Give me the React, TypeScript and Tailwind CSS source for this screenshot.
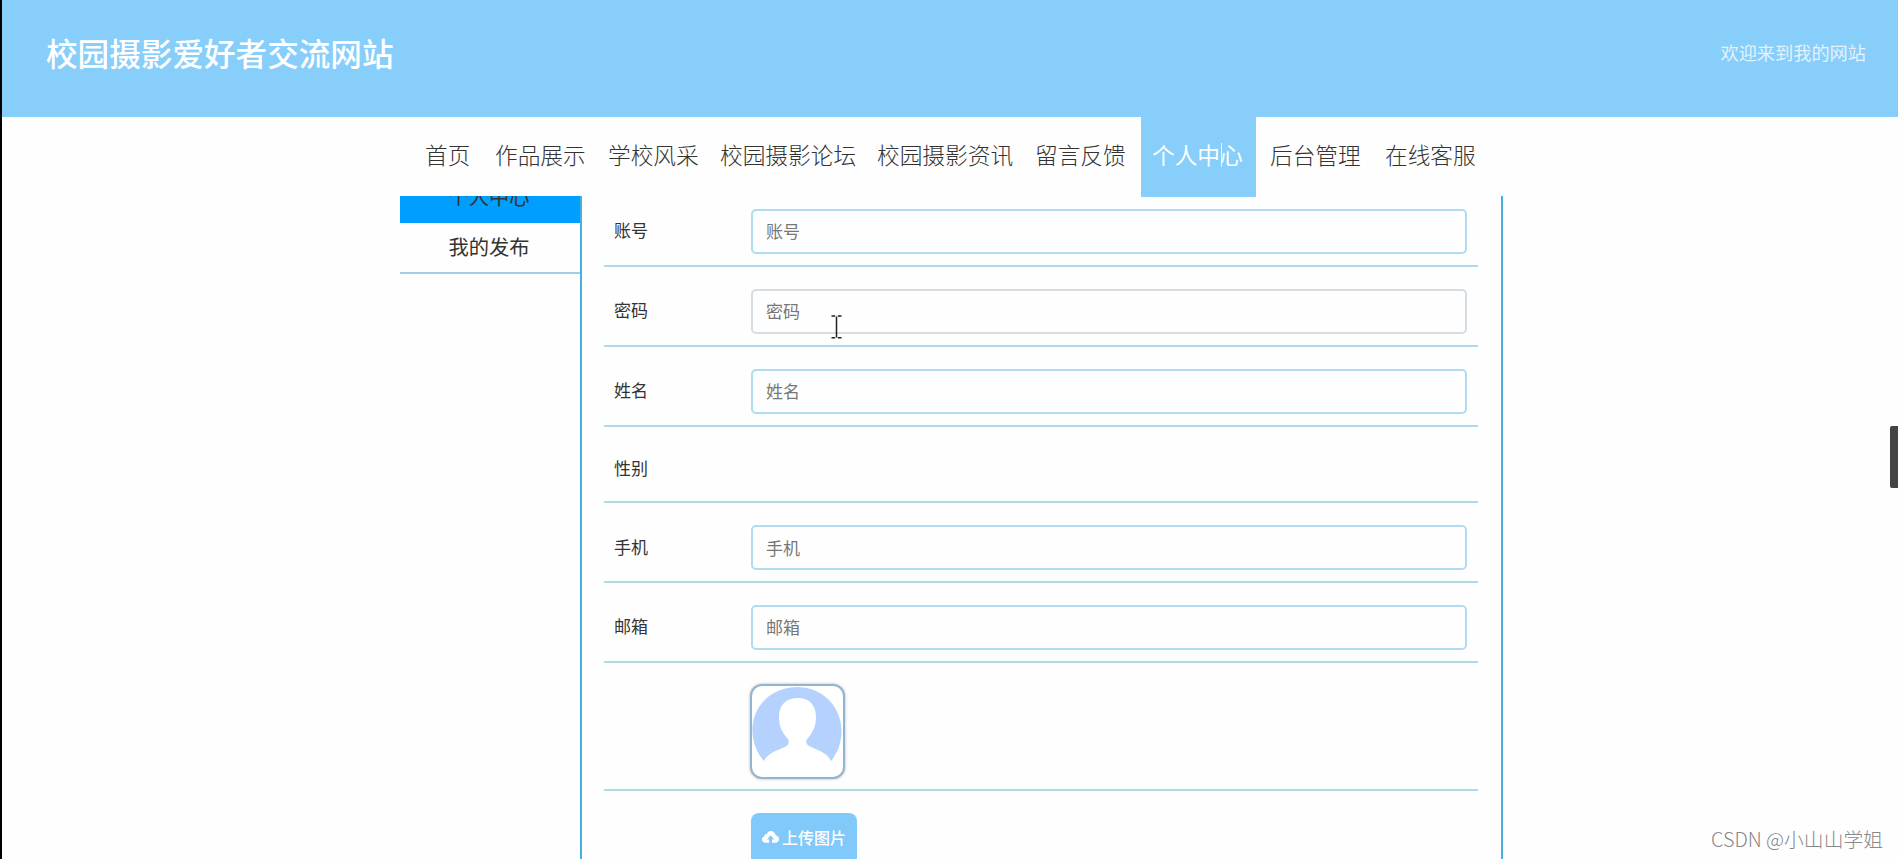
const navItems = [
  { label: '首页', width: 'w-[70px]' },
  { label: '作品展示', width: 'w-[113px]' },
  { label: '学校风采', width: 'w-[112px]' },
  { label: '校园摄影论坛', width: 'w-[157px]' },
  { label: '校园摄影资讯', width: 'w-[158px]' },
  { label: '留言反馈', width: 'w-[117px]' },
  { label: '个人中心', width: 'w-[115px]', active: true },
  { label: '后台管理', width: 'w-[118px]' },
  { label: '在线客服', width: 'w-[113px]' },
];

const fields = [
  { label: '账号', input: true, height: 'h-[80px]', shift: 'pb-[2px]' },
  { label: '密码', input: true, height: 'h-[80px]', shift: 'pb-[2px]', muted: true },
  { label: '姓名', input: true, height: 'h-[80px]', shift: 'pb-[2px]' },
  { label: '性别', input: false, height: 'h-[76px]', shift: '' },
  { label: '手机', input: true, height: 'h-[80px]', shift: 'pb-px' },
  { label: '邮箱', input: true, height: 'h-[80px]', shift: 'pb-[2px]' },
];

function Avatar() {
  return (
    <div className="w-[95px] h-[95px] rounded-[12px] border-2 border-[#8fb6d2] bg-white overflow-hidden shadow-[0_0_3px_#c9b0a4]">
      <svg viewBox="0 0 91 91" className="w-full h-full">
        <path
          d="M12 75C-6 54-3 23 20 8C38-3 61-1 76 13C94 31 93 58 79 75C74 65 62 63 57 60C54 58 53 55 56 52C61 46 64 40 64 31C64 19 57 12 46 12C34 12 27 19 27 31C27 40 30 46 35 52C38 55 37 59 33 61C27 64 16 66 12 75Z"
          fill="#b5d2ff"
        />
      </svg>
    </div>
  );
}

function CloudUpload() {
  return (
    <svg width="17" height="12" viewBox="0 0 17 12" fill="currentColor">
      <path d="M3.6 11.8C1.4 11.7 0 10.3 0 8.4c0-1.6 1-2.8 2.3-3.2C2.4 3.6 3.5 2.8 4.8 3C5.6 1.1 7 .1 8.8.1c2.5 0 4.4 1.7 4.7 4.2 2 .2 3.5 1.7 3.5 3.8 0 2.2-1.6 3.7-3.7 3.7H10V8.4h2.3L8.6 4.3 5 8.4h2.2v3.4z" />
    </svg>
  );
}

function TextCursor() {
  return (
    <svg className="absolute left-[829px] top-[315px]" width="11" height="24" viewBox="0 0 11 24" fill="none" stroke="#222" strokeWidth="1.5">
      <path d="M.5 1H4.2M6.8 1h3.7M5.5 1.5v21M.5 22.7H4.2M6.8 22.7h3.7" />
    </svg>
  );
}

export default function App() {
  return (
    <div className="relative h-[859px] overflow-hidden flex flex-col border-l-2 border-black bg-[#fefefe] text-[#333] font-['Noto_Sans_CJK_SC',sans-serif]">
      <header className="shrink-0 h-[117px] pl-[44px] pr-[32px] pb-[12px] flex items-center justify-between bg-[#87cefa]">
        <h1 className="text-[31.6px] leading-none font-medium text-white">校园摄影爱好者交流网站</h1>
        <span className="text-[18.2px] leading-none text-[#e3f2fc]">欢迎来到我的网站</span>
      </header>

      <nav className="shrink-0 relative z-10 h-[79px] pl-[412px] flex text-[22.7px] font-light">
        {navItems.map(({ label, width, active }) => (
          <a
            key={label}
            className={`shrink-0 h-[80px] pb-[3px] flex items-center whitespace-nowrap ${width} ${
              active ? 'bg-[#87cefa] text-white font-normal pl-[11px]' : label === '后台管理' ? 'pl-[14px]' : 'pl-[11px]'
            }`}
          >
            {label}
          </a>
        ))}
      </nav>

      <main className="flex-1 min-h-0 overflow-hidden pl-[398px] flex">
        <aside className="w-[180px] shrink-0 text-[20.3px]">
          <div className="-mt-[24px] h-[51px] pb-[2px] pr-[2px] flex items-center justify-center bg-[#009fff]">个人中心</div>
          <div className="h-[51px] pb-[2px] pr-[2px] flex items-center justify-center border-b-2 border-[#9dcfe8]">我的发布</div>
        </aside>

        <section className="w-[923px] shrink-0 border-x-2 border-[#4aaedb] pl-[22px] pr-[23px]">
          <div className="-mt-[9px]">
            {fields.map(({ label, input, height, shift, muted }) => (
              <div key={label} className={`flex pl-[10px] pr-[11px] pb-[11px] border-b-2 border-[#b0d9ec] text-[17px] items-end ${height}`}>
                <div className={`w-[137px] leading-[45px] ${shift}`}>{label}</div>
                {input && (
                  <input
                    placeholder={label}
                    className={`flex-1 h-[45px] px-[13px] rounded-[5px] border-2 bg-transparent placeholder:text-[#777] ${shift} ${
                      muted ? 'border-[#d5dde2]' : 'border-[#b0dcf2]'
                    }`}
                  />
                )}
              </div>
            ))}
            <div className="h-[128px] pl-[146px] pt-[21px] border-b-2 border-[#b0d9ec]">
              <Avatar />
            </div>
            <div className="pl-[147px] pt-[22px]">
              <button className="w-[106px] h-[52px] pl-[11px] pb-[4px] rounded-[8px] flex items-center gap-[3px] bg-[#80c9fa] text-white text-[16px] font-medium whitespace-nowrap">
                <CloudUpload />
                上传图片
              </button>
            </div>
          </div>
        </section>
      </main>

      <TextCursor />
      <div className="absolute z-20 left-[1219px] top-[143px] w-px h-[24px] bg-white/80" />
      <div className="absolute right-0 top-[426px] w-[8px] h-[62px] rounded-l-[2px] bg-[#444]" />
      <div className="absolute right-[15px] bottom-[7px] text-[19.8px] leading-[26px] font-light text-[#888] whitespace-nowrap">CSDN @小山山学姐</div>
    </div>
  );
}
